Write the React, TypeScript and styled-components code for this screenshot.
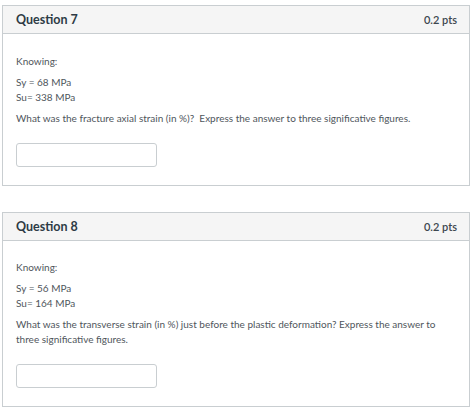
import styled, { createGlobalStyle } from "styled-components";

const GlobalStyle = createGlobalStyle`
  body {
    margin: 0;
    background: #fff;
    font-family: Lato, "Open Sans", sans-serif;
  }
`;

type QuestionData = {
  title: string;
  points: string;
  sy: string;
  su: string;
  prompt: string;
};

const questions: QuestionData[] = [
  {
    title: "Question 7",
    points: "0.2 pts",
    sy: "Sy = 68 MPa",
    su: "Su= 338 MPa",
    prompt:
      "What was the fracture axial strain (in %)?\u00a0 Express the answer to three significative figures.",
  },
  {
    title: "Question 8",
    points: "0.2 pts",
    sy: "Sy = 56 MPa",
    su: "Su= 164 MPa",
    prompt:
      "What was the transverse strain (in %) just before the plastic deformation? Express the answer to three significative figures.",
  },
];

const Question = ({ q, roomy }: { q: QuestionData; roomy?: boolean }) => (
  <Card>
    <Header>
      <Title>{q.title}</Title>
      <Points>{q.points}</Points>
    </Header>
    <Body $roomy={roomy}>
      <Para>Knowing:</Para>
      <Para>
        {q.sy}
        <br />
        {q.su}
      </Para>
      <Para>{q.prompt}</Para>
      <AnswerInput type="text" />
    </Body>
  </Card>
);

const App = () => {
  return (
    <>
      <GlobalStyle />
      <Page>
        <Question q={questions[0]} />
        <Question q={questions[1]} roomy />
      </Page>
    </>
  );
};

export default App;

//STYLED

const Page = styled.div`
  padding: 5px 4px 0 2px;
  display: flex;
  flex-direction: column;
  gap: 26px;
`;

const Card = styled.section`
  border: 1px solid #c9ced1;
  background: #fff;
`;

const Header = styled.div`
  display: flex;
  align-items: center;
  justify-content: space-between;
  height: 27px;
  padding: 0 12px 0 13px;
  background: #f5f5f5;
  border-bottom: 1px solid #c9ced1;
  color: #2d3b45;
`;

const Title = styled.h2`
  margin: 0;
  font-size: 12.5px;
  font-weight: 700;
`;

const Points = styled.span`
  font-size: 11px;
  font-weight: 600;
  color: #3d474f;
`;

const Body = styled.div<{ $roomy?: boolean }>`
  padding: ${(p) => (p.$roomy ? "19px" : "20px")} 16px 18px 13px;
  color: #4f565c;
`;

const Para = styled.p`
  margin: 0 0 6px;
  font-size: 10px;
  line-height: 15px;
`;

const AnswerInput = styled.input`
  display: block;
  box-sizing: border-box;
  width: 141px;
  height: 24px;
  margin-top: 17px;
  border: 1px solid #c9ced1;
  border-radius: 3px;
  background: #fff;
  outline: none;
`;
